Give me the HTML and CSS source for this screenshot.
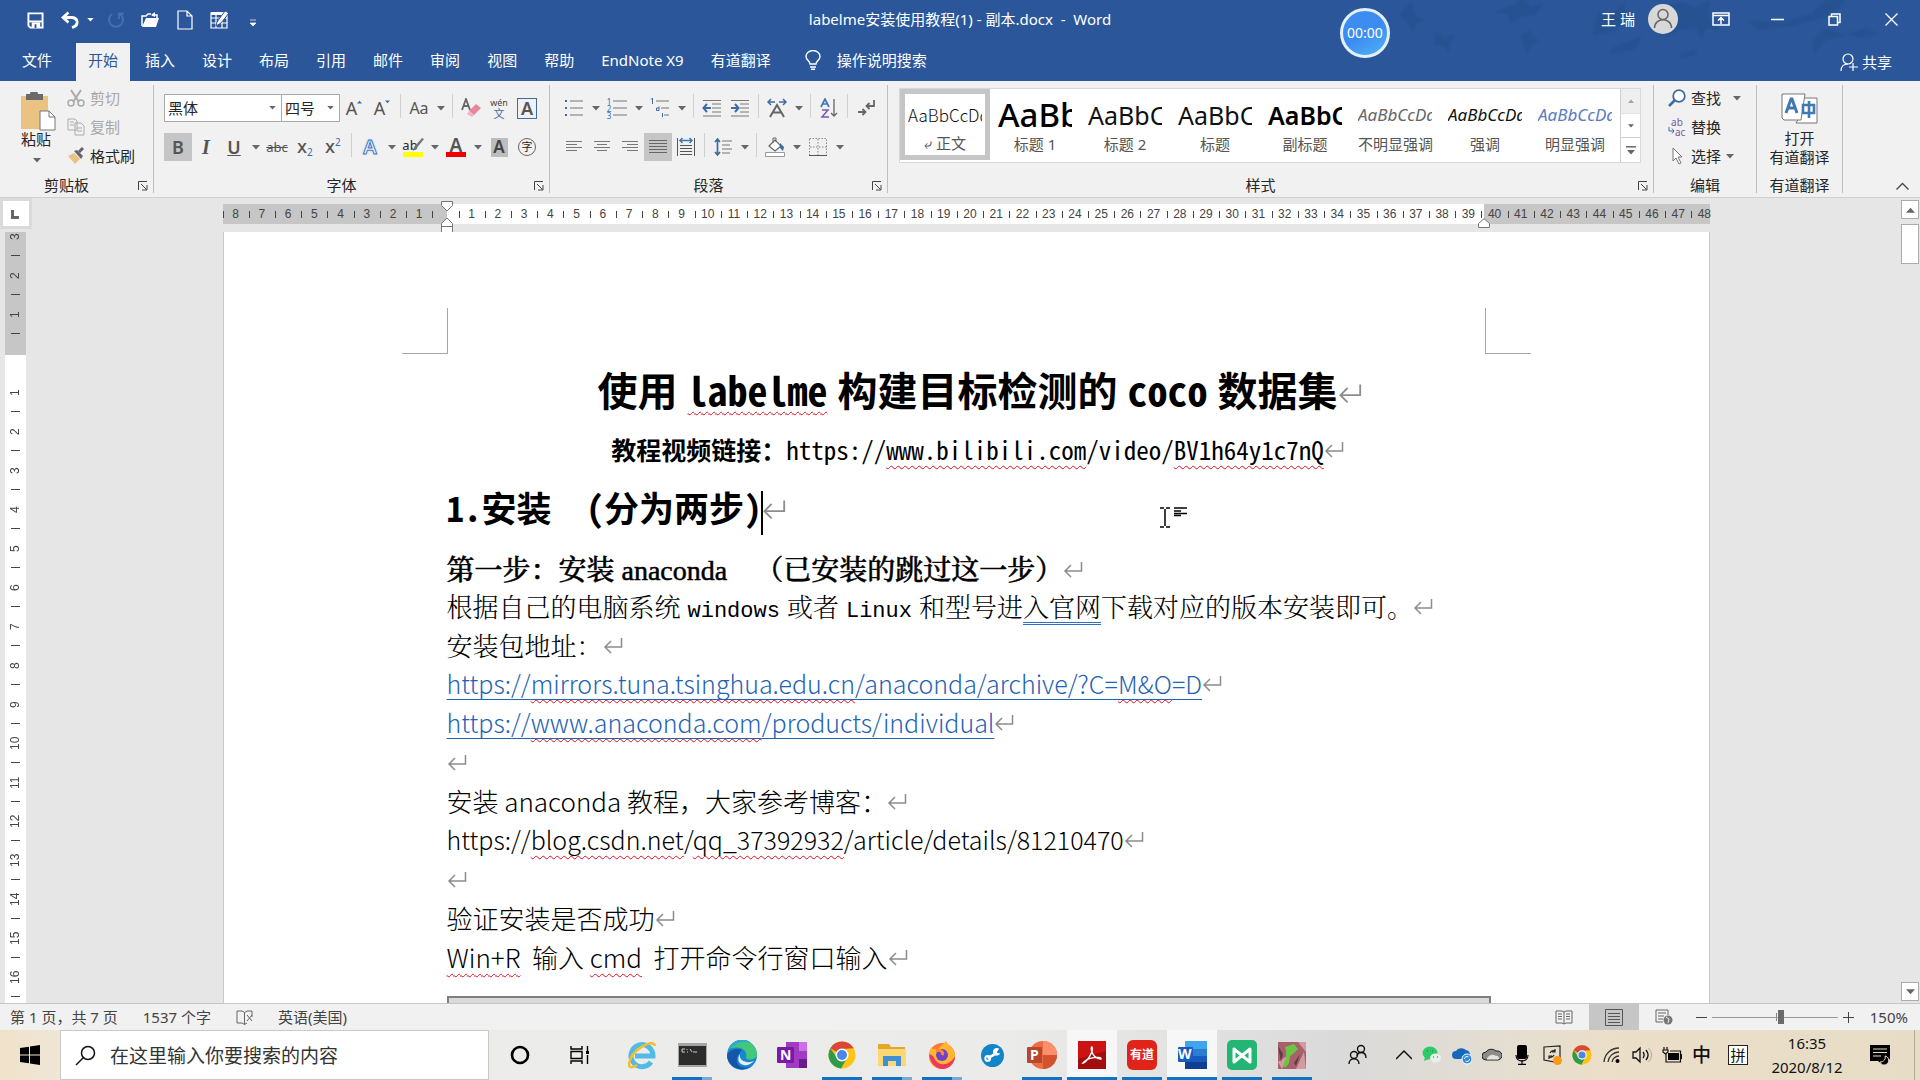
FILE: index.html
```html
<!DOCTYPE html>
<html lang="zh-CN">
<head>
<meta charset="utf-8">
<title>labelme安装使用教程(1) - 副本.docx - Word</title>
<link rel="stylesheet" href="styles.css">
</head>
<body>
<svg class="defs" aria-hidden="true">
  <symbol id="down" viewBox="0 0 8 5"><path d="M0 0h8L4 4.5z" fill="currentColor"/></symbol>
  <symbol id="launch" viewBox="0 0 10 10"><path d="M.5 9V.5H9M3 3l5.500 5.500M9 4v5H4" fill="none" stroke="#444"/></symbol>
  <symbol id="mark" viewBox="0 0 20 20"><path d="M18.500 2v9H2M8 5l-6 6 6 6" fill="none" stroke="#8c8c8c" stroke-width="1.500"/></symbol>
  <symbol id="chrome" viewBox="0 0 28 28"><circle cx="14" cy="14" r="13.500" fill="#fbc417"/><path d="M14 14L2.300 7.200A13.500 13.500 0 0 1 25.700 7.200L14 8z" fill="#d9473a"/><path d="M2.300 7.200A13.500 13.500 0 0 0 13 27.500l6-10.500-10.500-1z" fill="#2f9a4c"/><circle cx="14" cy="14" r="6.500" fill="#fff"/><circle cx="14" cy="14" r="5" fill="#4a86e8"/></symbol>
</svg>
<div class="app">
<header class="head">
  <svg class="flakes" viewBox="0 0 560 80" aria-hidden="true"><g fill="#24508f"><path d="M40 15l12-14 2 14 12 5-10 4-3 9-7-12zM76 32l8 6 12-4-6 8-1 12-5-8-10-2zM134 12l22-8 6-10 8 12 14-2-8 10-18 4-8 6-2-10zM160 36l10-6 2 8 8 2-8 5-6 10-2-10zM238 12l14 2 12-12 2 20-14 10-20 4zM252 48l30-12-8 14-24 4zM300 6l22-4 12 6 16-8-2 18 14 12-16-2-4 12-6-12-18 2-14 8 6-14-20 4zM318 54l16-4 4 4-16 4zM388 20l34 2 30-8 14-14h20l-14 16-40 10-34 4zM452 40l14-12 20 8-20 4-12 14zM486 34l20-6 14 6-20 4z"/></g></svg>
  <div class="titlebar">
    <div class="quick">
      <button aria-label="保存"><svg width="17" height="17" viewBox="0 0 18 18"><path d="M1.500 1.500h15v15h-13l-2-2z" fill="none" stroke="#fff" stroke-width="2"/><path d="M2 9h14v2H2z" fill="#fff"/><path d="M5 11h9v6H5z" fill="#fff"/><path d="M8 13h2v4H8z" fill="#2b579a"/></svg></button>
      <button aria-label="撤消"><svg width="18" height="18" viewBox="0 0 18 18"><path d="M2 6.500h8c8 0 8 8 1 10M7.500 1.500L2 6.500l5.500 5" fill="none" stroke="#fff" stroke-width="2.800"/></svg><svg class="dn" width="7" height="4"><use href="#down"/></svg></button>
      <button aria-label="恢复" class="dim"><svg width="18" height="18" viewBox="0 0 18 18"><path d="M5 3a7 7 0 1 0 8 0M12 8V2.500h5" fill="none" stroke="#4470b0" stroke-width="2"/></svg></button>
      <button aria-label="打开"><svg width="19" height="18" viewBox="0 0 19 18"><path d="M1 15V5h4l2-2h3M11 4h5v3" fill="none" stroke="#fff" stroke-width="1.500"/><path d="M1 16L5 7h13l-3 9z" fill="#fff"/><path d="M10 4l4-3v5z" fill="#fff"/></svg></button>
      <button aria-label="新建"><svg width="16" height="20" viewBox="0 0 16 20"><path d="M1 1h9l5 5v13H1zM10 1v5h5" fill="none" stroke="#fff" stroke-width="1.200"/></svg></button>
      <button aria-label="绘制表格"><svg width="19" height="20" viewBox="0 0 19 20"><path d="M1 3h16v15H1zM1 8h16M1 13h16M6 3v15M12 3v15" fill="none" stroke="#fff" stroke-width="1.200"/><path d="M1 2h13v3H1z" fill="#fff"/><path d="M7 12l8-11 4 2-8 10-5 3z" fill="#fff" stroke="#2b579a"/></svg></button>
      <button aria-label="自定义快速访问工具栏"><svg width="6" height="8" viewBox="0 0 7 8"><path d="M0 .5h7M0 4h7L3.500 7.500z" fill="#fff" stroke="#fff" stroke-width=".8"/></svg></button>
    </div>
    <h1 class="doctitle">labelme安装使用教程(1) - 副本.docx&nbsp; -&nbsp; Word</h1>
    <div class="winbtns">
      <div class="account"><span>王 瑞</span><svg width="30" height="30" viewBox="0 0 30 30"><circle cx="15" cy="15" r="15" fill="#d8d8d8"/><circle cx="15" cy="10.500" r="5" fill="none" stroke="#666" stroke-width="1.500"/><path d="M6.500 24c0-11 17-11 17 0" fill="none" stroke="#666" stroke-width="1.500"/></svg></div>
      <button aria-label="功能区显示选项"><svg width="18" height="14" viewBox="0 0 18 14"><path d="M1 1h16v12H1zM1 3.500h16M9 12V6M6 8.500l3-3 3 3" fill="none" stroke="#fff" stroke-width="1.500"/></svg></button>
      <button aria-label="最小化"><svg width="13" height="13"><path d="M0 6.500h13" stroke="#fff" stroke-width="1.500"/></svg></button>
      <button aria-label="还原"><svg width="13" height="13" viewBox="0 0 13 13"><path d="M1 3.500h8.500V12H1zM3.500 3V1H12v8.500H10" fill="none" stroke="#fff" stroke-width="1.500"/></svg></button>
      <button aria-label="关闭"><svg width="13" height="13" viewBox="0 0 13 13"><path d="M.5.500l12 12M12.500.5l-12 12" stroke="#fff" stroke-width="1.300"/></svg></button>
    </div>
  </div>
  <nav class="tabs">
    <button class="file">文件</button><button class="on">开始</button><button>插入</button><button>设计</button><button>布局</button><button>引用</button><button>邮件</button><button>审阅</button><button>视图</button><button>帮助</button><button>EndNote X9</button><button>有道翻译</button>
    <button class="tell"><svg width="16" height="20" viewBox="0 0 16 20"><path d="M5 14c0-3-4-4-4-7.500a7 6 0 0 1 14 0C15 10 11 11 11 14zM5 17h6M6 19.300h4" fill="none" stroke="#fff" stroke-width="1.400"/></svg>操作说明搜索</button>
    <button class="share"><svg width="18" height="18" viewBox="0 0 18 18"><circle cx="8" cy="6" r="5" fill="none" stroke="#fff" stroke-width="1.200"/><path d="M1 18c0-5 3-7 7-7M13 10v8M9 14h9" fill="none" stroke="#fff" stroke-width="1.200"/></svg>共享</button>
  </nav>
  <div class="timer">00:00</div>
</header>

<section class="ribbon">
  <div class="group clip">
    <div class="gbody">
      <button class="paste"><svg width="36" height="39" viewBox="0 0 36 39"><path d="M1 4h27v33H1z" fill="#eac282"/><path d="M6 2h4a4 3 0 0 1 8 0h5v6H6z" fill="#6a6a6a"/><path d="M20 19h9l6 6v13H20z" fill="#fff" stroke="#777"/><path d="M29 19v6h6" fill="none" stroke="#777"/></svg><span>粘贴</span><svg class="dn" width="8" height="5"><use href="#down"/></svg></button>
      <div class="cmds">
        <button class="off"><svg width="18" height="18" viewBox="0 0 18 18"><path d="M4 1l8 12M14 1L6 13" stroke="#aaa" stroke-width="2"/><circle cx="4" cy="14" r="3" fill="none" stroke="#aaa" stroke-width="1.500"/><circle cx="14" cy="14" r="3" fill="none" stroke="#aaa" stroke-width="1.500"/></svg>剪切</button>
        <button class="off"><svg width="18" height="18" viewBox="0 0 18 18"><path d="M1 1h7l2 2v9H1zM8 5h6l3 3v9H8z" fill="#f1f1f1" stroke="#aaa"/><path d="M3 4h4M3 7h4M10 10h5M10 13h5" stroke="#aaa"/></svg>复制</button>
        <button><svg width="18" height="18" viewBox="0 0 18 18"><path d="M1 9l6-3 6 6-5 5z" fill="#eac282"/><path d="M7 4l3-1 6 6-2 3z" fill="#666"/><path d="M12 5l4-4" stroke="#666" stroke-width="3"/></svg>格式刷</button>
      </div>
    </div>
    <div class="gfoot"><span>剪贴板</span><button class="launch" aria-label="剪贴板设置"><svg width="10" height="10"><use href="#launch"/></svg></button></div>
  </div>

  <div class="group font">
    <div class="gbody rows">
      <div class="row">
        <button class="combo face">黑体<svg class="dn" width="7" height="4"><use href="#down"/></svg></button><button class="combo size">四号<svg class="dn" width="7" height="4"><use href="#down"/></svg></button>
        <button class="t g big">A<svg class="up" width="5" height="4"><use href="#down"/></svg></button><button class="t g big">A<svg width="5" height="4"><use href="#down"/></svg></button><i class="sep"></i>
        <button class="t g aa">Aa</button><button class="a" aria-label="更改大小写选项"><svg class="dn" width="8" height="5"><use href="#down"/></svg></button><i class="sep"></i>
        <button class="t" aria-label="清除所有格式"><svg width="20" height="20" viewBox="0 0 20 20"><path d="M1 12L5 1l4 11M2.500 8h5" fill="none" stroke="#666" stroke-width="1.800"/><path d="M8 13l7-7 5 4-7 7z" fill="#e8879b"/><path d="M8 13l5 4-2 2-5-3z" fill="#f3b6c1"/></svg></button>
        <button class="t wen"><small>wén</small><span>文</span></button>
        <button class="t"><span class="boxa">A</span></button>
      </div>
      <div class="row">
        <button class="t g sel b">B</button><button class="t g it">I</button><button class="t g un">U</button><button class="a" aria-label="下划线选项"><svg class="dn" width="8" height="5"><use href="#down"/></svg></button>
        <button class="t st">abc</button><button class="t g x">X<sub>2</sub></button><button class="t g x">X<sup>2</sup></button><i class="sep"></i>
        <button class="t glow">A</button><button class="a" aria-label="文本效果选项"><svg class="dn" width="8" height="5"><use href="#down"/></svg></button>
        <button class="t bar hl">ab<svg width="12" height="14" viewBox="0 0 12 14"><path d="M12 1L4 11l-3 2 1-4 8-9z" fill="#777"/></svg></button><button class="a" aria-label="突出显示选项"><svg class="dn" width="8" height="5"><use href="#down"/></svg></button>
        <button class="t g bar red">A</button><button class="a" aria-label="字体颜色选项"><svg class="dn" width="8" height="5"><use href="#down"/></svg></button>
        <button class="t"><span class="shade">A</span></button><button class="t"><span class="circ">字</span></button>
      </div>
    </div>
    <div class="gfoot"><span>字体</span><button class="launch" aria-label="字体设置"><svg width="10" height="10"><use href="#launch"/></svg></button></div>
  </div>

  <div class="group para">
    <div class="gbody rows">
      <div class="row">
        <button class="t" aria-label="项目符号"><svg width="20" height="20" viewBox="0 0 20 20"><path d="M6 3h13M6 10h13M6 17h13" stroke="#777" stroke-width="1.200"/><path d="M1 2h2v2H1zM1 9h2v2H1zM1 16h2v2H1z" fill="#3f6ba5"/></svg></button><button class="a" aria-label="项目符号选项"><svg class="dn" width="8" height="5"><use href="#down"/></svg></button>
        <button class="t num" aria-label="编号"><span>1<br>2<br>3</span><svg width="14" height="20" viewBox="0 0 14 20"><path d="M0 3h14M0 10h14M0 17h14" stroke="#777" stroke-width="1.200"/></svg></button><button class="a" aria-label="编号选项"><svg class="dn" width="8" height="5"><use href="#down"/></svg></button>
        <button class="t" aria-label="多级列表"><svg width="20" height="20" viewBox="0 0 20 20"><path d="M6 3h13M11 10h8M14 17h5" stroke="#777" stroke-width="1.200"/><path d="M1 1.500L2.500 0v6M9 8.500v4H6.500v-2.500H9M12.500 15v4" stroke="#3f6ba5" fill="none"/></svg></button><button class="a" aria-label="多级列表选项"><svg class="dn" width="8" height="5"><use href="#down"/></svg></button><i class="sep"></i>
        <button class="t" aria-label="减少缩进量"><svg width="20" height="18" viewBox="0 0 20 18"><path d="M1 1.500h18M10 5h9M10 9h9M10 13h9M1 17h18" stroke="#777"/><path d="M9 9H2M5 5L1.500 9 5 13" fill="none" stroke="#3f6ba5" stroke-width="2"/></svg></button>
        <button class="t" aria-label="增加缩进量"><svg width="20" height="18" viewBox="0 0 20 18"><path d="M1 1.500h18M10 5h9M10 9h9M10 13h9M1 17h18" stroke="#777"/><path d="M1 9h7M5 5l3.500 4L5 13" fill="none" stroke="#3f6ba5" stroke-width="2"/></svg></button><i class="sep"></i>
        <button class="t" aria-label="中文版式"><svg width="20" height="20" viewBox="0 0 20 20"><path d="M3 19l7-12 7 12M6 14.500h8" fill="none" stroke="#666" stroke-width="2"/><path d="M8 4H2M4 1L1 4l3 3M12 4h6M16 1l3 3-3 3" fill="none" stroke="#3f6ba5" stroke-width="1.500"/></svg></button><button class="a" aria-label="中文版式选项"><svg class="dn" width="8" height="5"><use href="#down"/></svg></button><i class="sep"></i>
        <button class="t" aria-label="排序"><svg width="18" height="20" viewBox="0 0 18 20"><path d="M1 9l4-8 4 8M2.500 6h5" fill="none" stroke="#3f7ab5" stroke-width="1.700"/><path d="M2 12h6l-6 7h7" fill="none" stroke="#8055b0" stroke-width="1.500"/><path d="M14 1v17M11 15l3 3 3-3" fill="none" stroke="#666" stroke-width="1.300"/></svg></button><i class="sep"></i>
        <button class="t" aria-label="显示编辑标记"><svg width="18" height="18" viewBox="0 0 18 18"><path d="M17 1v6h-7M12.500 4l-3 3 3 3M1 13h7M5.500 10l3 3-3 3" fill="none" stroke="#666" stroke-width="1.800"/></svg></button>
      </div>
      <div class="row">
        <button class="t" aria-label="左对齐"><svg width="16" height="14"><path d="M0 1.500h16M0 4.500h11M0 7.500h16M0 10.500h11" stroke="#777"/></svg></button>
        <button class="t" aria-label="居中"><svg width="16" height="14"><path d="M0 1.500h16M3 4.500h10M0 7.500h16M3 10.500h10" stroke="#777"/></svg></button>
        <button class="t" aria-label="右对齐"><svg width="16" height="14"><path d="M0 1.500h16M5 4.500h11M0 7.500h16M5 10.500h11" stroke="#777"/></svg></button>
        <button class="t sel" aria-label="两端对齐"><svg width="18" height="16"><path d="M0 1.500h18M0 4.500h18M0 7.500h18M0 10.500h18M0 13.500h18" stroke="#666"/></svg></button>
        <button class="t" aria-label="分散对齐"><svg width="18" height="20" viewBox="0 0 18 20"><path d="M.5 1v18M17.500 1v18M3 8.500h12M3 11.500h12M3 14.500h12M3 17.500h12" stroke="#555"/><path d="M3 3.500h12M5.500 1L3 3.500 5.500 6M12.500 1L15 3.500 12.500 6" fill="none" stroke="#3f7ab5" stroke-width="1.500"/></svg></button><i class="sep"></i>
        <button class="t" aria-label="行距"><svg width="18" height="20" viewBox="0 0 18 20"><path d="M8 4h10M8 8h8M8 12h10M8 16h8" stroke="#777" stroke-width="1.200"/><path d="M3.500 2v16M1 5l2.500-3L6 5M1 15l2.500 3L6 15" fill="none" stroke="#3f6ba5" stroke-width="1.700"/></svg></button><button class="a" aria-label="行距选项"><svg class="dn" width="8" height="5"><use href="#down"/></svg></button><i class="sep"></i>
        <button class="t" aria-label="底纹"><svg width="20" height="20" viewBox="0 0 20 20"><path d="M4 9l6-6 6 6-6 5z" fill="#fff" stroke="#666" stroke-width="1.200"/><path d="M8 6V1h3v4" fill="none" stroke="#666"/><path d="M15 6l4 4-1 4-3-3z" fill="#3f6ba5"/><path d="M.5 15.500h19v4H.5z" fill="#fff" stroke="#999"/></svg></button><button class="a" aria-label="底纹选项"><svg class="dn" width="8" height="5"><use href="#down"/></svg></button>
        <button class="t" aria-label="边框"><svg width="18" height="18" viewBox="0 0 18 18"><path d="M.5.500h17v17H.5zM9 1v17M1 9h17" fill="none" stroke="#888" stroke-dasharray="1.500 1.500"/><path d="M0 17.500h18" stroke="#555"/></svg></button><button class="a" aria-label="边框选项"><svg class="dn" width="8" height="5"><use href="#down"/></svg></button>
      </div>
    </div>
    <div class="gfoot"><span>段落</span><button class="launch" aria-label="段落设置"><svg width="10" height="10"><use href="#launch"/></svg></button></div>
  </div>

  <div class="group styles">
    <div class="gbody">
      <div class="gallery">
        <button class="style cur"><span class="smp body">AaBbCcDd</span><span class="nm">⤶ 正文</span></button>
        <button class="style"><span class="smp h1">AaBb</span><span class="nm">标题 1</span></button>
        <button class="style"><span class="smp h2">AaBbC</span><span class="nm">标题 2</span></button>
        <button class="style"><span class="smp h2">AaBbC</span><span class="nm">标题</span></button>
        <button class="style"><span class="smp h2 bold">AaBbC</span><span class="nm">副标题</span></button>
        <button class="style"><span class="smp em soft">AaBbCcDd</span><span class="nm">不明显强调</span></button>
        <button class="style"><span class="smp em">AaBbCcDd</span><span class="nm">强调</span></button>
        <button class="style"><span class="smp em blue">AaBbCcDd</span><span class="nm">明显强调</span></button>
        <div class="gscroll"><button class="gone" aria-label="上一行"><svg class="dn up" width="6" height="4"><use href="#down"/></svg></button><button aria-label="下一行"><svg class="dn" width="6" height="4"><use href="#down"/></svg></button><button aria-label="其他"><svg width="10" height="9" viewBox="0 0 10 9"><path d="M0 .8h10" stroke="#666" stroke-width="1.500"/><path d="M1 4h8L5 8.500z" fill="#666"/></svg></button></div>
      </div>
    </div>
    <div class="gfoot"><span>样式</span><button class="launch" aria-label="样式设置"><svg width="10" height="10"><use href="#launch"/></svg></button></div>
  </div>

  <div class="group edit">
    <div class="gbody cmds">
      <button><svg width="18" height="18" viewBox="0 0 18 18"><circle cx="11" cy="7" r="5.800" fill="#fff" stroke="#3f6ba5" stroke-width="1.800"/><path d="M7 11l-6 6" stroke="#3f6ba5" stroke-width="2.500"/></svg>查找<svg class="dn far" width="8" height="5"><use href="#down"/></svg></button>
      <button><span class="rep"><b>ab</b><em><svg width="7" height="7" viewBox="0 0 7 7"><path d="M1 0v4h5M4 1.500L6 4 4 6.500" fill="none" stroke="#3f6ba5"/></svg><b>ac</b></em></span>替换</button>
      <button><svg width="18" height="18" viewBox="0 0 18 18"><path d="M5 1v13l3-3 3 6 2-1-3-6h4z" fill="#fff" stroke="#777"/></svg>选择<svg class="dn" width="8" height="5"><use href="#down"/></svg></button>
    </div>
    <div class="gfoot"><span>编辑</span></div>
  </div>

  <div class="group youdao">
    <div class="gbody"><button class="open"><svg width="38" height="32" viewBox="0 0 38 32"><path d="M18 5h18v25H15l3-5z" fill="#fff" stroke="#777"/><path d="M1 1h23l-4 26H3l-2-2z" fill="#fff" stroke="#777"/><path d="M5 20l5-14h1l5 14M7 15h7" fill="none" stroke="#3f7ab5" stroke-width="3"/><path d="M22 12h11v8H22zM28 8v17" fill="none" stroke="#3f7ab5" stroke-width="2.600"/></svg><span>打开</span><span>有道翻译</span></button></div>
    <div class="gfoot"><span>有道翻译</span></div>
  </div>
  <div class="tail"><button aria-label="折叠功能区"><svg width="13" height="8"><path d="M.5 7.500l6-6 6 6" fill="none" stroke="#444" stroke-width="1.300"/></svg></button></div>
</section>

<main class="work">
  <div class="vcol">
    <div class="tabsel"><i></i></div>
    <div class="vrule"><div class="vnums neg"><span>3</span><span>2</span><span>1</span></div><div class="vnums"><span></span><span>1</span><span>2</span><span>3</span><span>4</span><span>5</span><span>6</span><span>7</span><span>8</span><span>9</span><span>10</span><span>11</span><span>12</span><span>13</span><span>14</span><span>15</span><span>16</span><span></span></div></div>
  </div>
  <div class="canvas">
    <div class="hrule">
      <div class="hnums"><span>8</span><span>7</span><span>6</span><span>5</span><span>4</span><span>3</span><span>2</span><span>1</span><span></span><span>1</span><span>2</span><span>3</span><span>4</span><span>5</span><span>6</span><span>7</span><span>8</span><span>9</span><span>10</span><span>11</span><span>12</span><span>13</span><span>14</span><span>15</span><span>16</span><span>17</span><span>18</span><span>19</span><span>20</span><span>21</span><span>22</span><span>23</span><span>24</span><span>25</span><span>26</span><span>27</span><span>28</span><span>29</span><span>30</span><span>31</span><span>32</span><span>33</span><span>34</span><span>35</span><span>36</span><span>37</span><span>38</span><span>39</span><span>40</span><span>41</span><span>42</span><span>43</span><span>44</span><span>45</span><span>46</span><span>47</span><span>48</span></div>
      <svg class="ind left" width="12" height="33" viewBox="0 0 12 33"><path d="M.5.500h11v4L6 10 .5 4.500zM.5 31.500v-9L6 17l5.500 5.500v9zM.5 25.500h11" fill="#fff" stroke="#777"/></svg>
      <svg class="ind right" width="12" height="10" viewBox="0 0 12 10"><path d="M.5 9.500v-4L6 .7l5.500 4.800v4z" fill="#fff" stroke="#777"/></svg>
    </div>
    <article class="page">
      <div class="corners"><i></i><i></i></div>
      <div class="text">
        <p class="title">使用<span class="ml"><u class="sq">labelme</u></span>构建目标检测的<span class="ml">coco</span>数据集<svg class="mk l"><use href="#mark"/></svg></p>
        <p class="sub"><b>教程视频链接：</b><span>https://<u class="sq">www.bilibili.com</u>/video/<u class="sq">BV1h64y1c7nQ</u></span><svg class="mk"><use href="#mark"/></svg></p>
        <p class="sec"><span>1.</span>安装　<span>(</span>分为两步<span>)</span><i class="caret"></i><svg class="mk l"><use href="#mark"/></svg></p>
        <p class="step">第一步：安装 anaconda　（已安装的跳过这一步）<svg class="mk"><use href="#mark"/></svg></p>
        <p class="song">根据自己的电脑系统<span>windows</span>或者<span>Linux</span>和型号进<u class="gr">入官网</u>下载对应的版本安装即可。<svg class="mk"><use href="#mark"/></svg></p>
        <p class="song">安装包地址：<svg class="mk"><use href="#mark"/></svg></p>
        <p class="url"><a href="#">https://<u class="sq">mirrors.tuna.tsinghua.edu.cn</u>/anaconda/archive/?C=<u class="sq">M&amp;O</u>=D</a><svg class="mk"><use href="#mark"/></svg></p>
        <p class="url"><a href="#">https://<u class="sq">www.anaconda.com</u>/products/individual</a><svg class="mk"><use href="#mark"/></svg></p>
        <p><svg class="mk"><use href="#mark"/></svg></p>
        <p>安装 anaconda 教程，大家参考博客：<svg class="mk"><use href="#mark"/></svg></p>
        <p class="url">https://<u class="sq">blog.csdn.net</u>/<u class="sq">qq_37392932</u>/article/details/81210470<svg class="mk"><use href="#mark"/></svg></p>
        <p><svg class="mk"><use href="#mark"/></svg></p>
        <p>验证安装是否成功<svg class="mk"><use href="#mark"/></svg></p>
        <p><u class="sq">Win+R</u>&nbsp; 输入 <u class="sq">cmd</u>&nbsp; 打开命令行窗口输入<svg class="mk"><use href="#mark"/></svg></p>
        <div class="box"></div>
      </div>
      <svg class="ibeam" width="27" height="21" viewBox="0 0 27 21"><path d="M0 1h4M6 1h4M0 20h4M6 20h4M5 2v17M14 1h13M14 4h7M14 6.500h13M14 8.500h7" stroke="#000" stroke-width="1.500"/></svg>
    </article>
  </div>
  <div class="vscroll"><button aria-label="向上滚动"><svg class="dn up" width="9" height="6"><use href="#down"/></svg></button><i></i><button aria-label="向下滚动"><svg class="dn" width="9" height="6"><use href="#down"/></svg></button></div>
</main>

<footer class="status">
  <div class="info"><span>第 1 页，共 7 页</span><span>1537 个字</span><svg width="17" height="15" viewBox="0 0 17 15"><path d="M16 7V1h-5L8.500 2.500 6 1H1v12h5l2.500 1.500L11 13M8.500 2.500v12M11 5l5 6M16 5l-5 6" fill="none" stroke="#666"/></svg><span>英语(美国)</span></div>
  <div class="views">
    <button aria-label="阅读视图"><svg width="18" height="15" viewBox="0 0 18 15"><path d="M1 1h6l2 1 2-1h6v12h-6l-2 1-2-1H1zM9 2v12M3 4h4M3 6.500h4M3 9h4M11 4h4M11 6.500h4M11 9h4" fill="none" stroke="#666"/></svg></button>
    <button class="on" aria-label="页面视图"><svg width="18" height="17" viewBox="0 0 18 17"><path d="M.5.500h17v16H.5zM3 4.500h12M3 7.500h12M3 10.500h12M3 13.500h12" fill="none" stroke="#555"/></svg></button>
    <button aria-label="Web 版式视图"><svg width="18" height="16" viewBox="0 0 18 16"><path d="M8 13H1V1h12v5M3 4h8M3 7h6M3 10h5" fill="none" stroke="#666"/><circle cx="13" cy="11" r="4.500" fill="#777"/><path d="M11 8l3 2-1 4" stroke="#f1f1f1" fill="none"/></svg></button>
  </div>
  <div class="zoom"><button aria-label="缩小"><svg width="11" height="11"><path d="M0 5.500h11" stroke="#444"/></svg></button><input type="range" min="10" max="230" value="132" aria-label="显示比例"><button aria-label="放大"><svg width="11" height="11"><path d="M0 5.500h11M5.500 0v11" stroke="#444"/></svg></button><span>150%</span></div>
</footer>

<div class="taskbar">
  <button class="start" aria-label="开始"><svg width="20" height="20" viewBox="0 0 20 20"><path d="M0 3l9-1.300V9.500H0zM10 1.500L20 0v9.500H10zM0 10.500h9v7.800L0 17zM10 10.500h10V20l-10-1.500z"/></svg></button>
  <label class="search"><svg width="21" height="21" viewBox="0 0 21 21"><circle cx="13" cy="8" r="6.500" fill="none" stroke="#111" stroke-width="1.500"/><path d="M8.500 12.500L1 20" stroke="#111" stroke-width="1.500"/></svg><input type="text" placeholder="在这里输入你要搜索的内容" aria-label="搜索"></label>
  <div class="sys">
    <button aria-label="Cortana"><svg width="20" height="20"><circle cx="10" cy="10" r="8" fill="none" stroke="#000" stroke-width="2.600"/></svg></button>
    <button aria-label="任务视图"><svg width="21" height="20" viewBox="0 0 21 20"><path d="M1 1v3h11V1M1 19v-3h11v3M1 6.500h11v7H1zM17.500 1v5M17.500 10v9" fill="none" stroke="#000" stroke-width="1.400"/><path d="M16 6h3v3h-3z"/></svg></button>
  </div>
  <div class="apps">
    <button aria-label="Internet Explorer"><svg width="30" height="30" viewBox="0 0 30 30"><path d="M8 16h18a11 11 0 1 0-2 6" fill="none" stroke="#4fbbe6" stroke-width="5"/><path d="M28 6C27-2 4 9 2 24c0 5 5 3 8 1" fill="none" stroke="#f3bf2d" stroke-width="2.500"/></svg></button>
    <button class="run two" aria-label="命令提示符"><svg width="29" height="24" viewBox="0 0 29 24"><path d="M0 0h29v24H0z" fill="#a5a5a5"/><path d="M1 3h27v19H1z" fill="#2c2c2c"/><path d="M4 6h3M4 6v3h3M9 6v1M9 9h1M12 6l2 3M15 9h4" stroke="#ccc" fill="none"/></svg></button>
    <button aria-label="Edge"><svg width="30" height="30" viewBox="0 0 30 30"><circle cx="15" cy="15" r="15" fill="#1687d0"/><path d="M1 10C5-4 28-3 30 14c0 6-9 7-11 4 3-10-11-13-18-8z" fill="#43c87a"/><path d="M1 10C6-3 20-2 24 3c-8-3-14 0-23 7z" fill="#2aaad0"/><path d="M12 14c-7 10 4 18 14 11C16 34 0 28 0 15c3-6 11-7 15-5z" fill="#1656a8"/><path d="M13 14c-2 7 8 10 14 7-3 3-7 5-10 4-6-1-7-7-4-11z" fill="#eee"/></svg></button>
    <button aria-label="OneNote"><svg width="30" height="26" viewBox="0 0 30 26"><path d="M9 0h21v26H9z" fill="#a23bc4"/><path d="M22 0h8v9h-8z" fill="#cf6fe6"/><path d="M22 17h8v9h-8z" fill="#6a1c8c"/><rect y="5" width="17" height="16" rx="1" fill="#7719aa"/><text x="3" y="18" class="logo">N</text></svg></button>
    <button class="run" aria-label="Chrome"><svg width="28" height="28"><use href="#chrome"/></svg></button>
    <button class="run two" aria-label="文件资源管理器"><svg width="28" height="24" viewBox="0 0 28 24"><path d="M0 1h11l2 3h14v19H0z" fill="#e4a72b"/><path d="M0 6h28v17H0z" fill="#fbd873"/><path d="M5 23V13h18v10h-5v-5h-8v5z" fill="#3d8fd6"/></svg></button>
    <button class="run two" aria-label="Firefox"><svg width="28" height="28" viewBox="0 0 28 28"><circle cx="14" cy="15" r="13" fill="#ff7a2f"/><path d="M3 6c1 3 3 2 7 2l8-8c2 5 10 7 9 17-3 14-24 14-26 0z" fill="#ffb52e"/><path d="M1 13c2 20 25 19 26 2-5 10-17 12-22 0z" fill="#ef3562"/><circle cx="14" cy="14" r="6" fill="#7440c8"/><path d="M8 10c4-2 8 1 6 4" fill="none" stroke="#ff8a2a" stroke-width="3"/></svg></button>
    <button aria-label="工具"><svg width="23" height="23" viewBox="0 0 24 24"><circle cx="12" cy="12" r="12" fill="#1484c9"/><path d="M7 15l10-6" stroke="#fff" stroke-width="3"/><circle cx="7" cy="15" r="2.500" fill="none" stroke="#fff" stroke-width="2"/><path d="M19 5l-3 4 4 1a4 4 0 1 1-1-5z" fill="#fff"/></svg></button>
    <button class="run" aria-label="PowerPoint"><svg width="30" height="28" viewBox="0 0 30 28"><circle cx="16" cy="14" r="14" fill="#ed6c47"/><path d="M16 0a14 14 0 0 1 14 14H16z" fill="#ff8f6b"/><path d="M16 14h14a14 14 0 0 1-14 14z" fill="#d35230"/><rect y="6" width="15" height="16" rx="1" fill="#b7472a"/><text x="3" y="19" class="logo">P</text></svg></button>
    <button class="run wide" aria-label="Acrobat"><svg width="28" height="28" viewBox="0 0 28 28"><path d="M0 0h28v28H0z" fill="#a30d0d"/><path d="M0 0h28v10L0 18z" fill="#cc1212"/><path d="M5 22c4-1 11-12 9-16-2 0 0 12 9 12 1-3-14-2-18 4z" fill="none" stroke="#fff" stroke-width="1.400"/></svg></button>
    <button class="run" aria-label="有道词典"><span class="yd">有道</span></button>
    <button class="run wide" aria-label="Word"><svg width="29" height="28" viewBox="0 0 29 28"><path d="M7 0h22v28H7z" fill="#2b7cd3"/><path d="M7 0h22v8H7z" fill="#41a5ee"/><path d="M7 15h22v6H7z" fill="#185abd"/><path d="M7 21h22v7H7z" fill="#103f91"/><rect y="6" width="15" height="15" rx="1" fill="#185abd"/><text x="0" y="18" class="logo">W</text></svg></button>
    <button class="run" aria-label="脑图"><svg width="30" height="30" viewBox="0 0 30 30"><rect width="30" height="30" rx="5" fill="#22b573"/><path d="M7 9v13l16-13v13L7 9z" fill="none" stroke="#fff" stroke-width="3" stroke-linejoin="round"/></svg></button>
    <button class="run" aria-label="图片"><svg width="28" height="27" viewBox="0 0 28 27"><path d="M0 0h28v27H0z" fill="#a8616c"/><path d="M20 0h8v10zM18 27L26 10l2 17zM0 20L12 12 4 27z" fill="#d59aa0"/><path d="M7 5l9-3 4 5-4 4-4 3-1 7-3 4H4l4-8V9z" fill="#6cc644"/><path d="M0 4l5 8-2 8zM22 12l-4 12-2-3z" fill="#5c3c46"/></svg></button>
  </div>
  <div class="tray">
    <svg width="20" height="22" viewBox="0 0 20 22"><circle cx="13" cy="5" r="3.500" fill="none" stroke="#111" stroke-width="1.400"/><path d="M9 12c1-5 9-5 9 2" fill="none" stroke="#111" stroke-width="1.400"/><circle cx="6" cy="11" r="3.500" fill="none" stroke="#111" stroke-width="1.400"/><path d="M1 20c0-7 10-7 10 0" fill="none" stroke="#111" stroke-width="1.400"/></svg>
    <i class="gap"></i>
    <svg width="16" height="20" viewBox="0 0 16 20"><path d="M0 14l8-8 8 8" fill="none" stroke="#111" stroke-width="1.500"/></svg>
    <svg width="20" height="20" viewBox="0 0 20 20"><ellipse cx="8" cy="8" rx="7.500" ry="6.500" fill="#2ecb6b"/><path d="M3 12l-1 4 5-2z" fill="#2ecb6b"/><ellipse cx="13.500" cy="13" rx="5.500" ry="4.500" fill="#e6efe9"/><path d="M5 6h1M10 6h1M11 12h1M15 12h1" stroke="#555"/></svg>
    <svg width="20" height="20" viewBox="0 0 20 20"><path d="M4 14a4 4 0 0 1 0-8 6 5 0 0 1 10-1 5 5 0 0 1 2 9z" fill="#1669b8"/><circle cx="15" cy="14" r="5" fill="#2c8be0" stroke="#fff"/><path d="M12.500 14a2.500 2.500 0 0 1 4-2M17.500 14a2.500 2.500 0 0 1-4 2" stroke="#fff" fill="none"/></svg>
    <svg width="20" height="20" viewBox="0 0 20 20"><path d="M4 15a4 4 0 0 1 0-8 6 5 0 0 1 10-1 5 4.500 0 0 1 2 9z" fill="#8b8b88" stroke="#222"/><path d="M5 14.500c0-3 5-6 8-4 4 0 5 3 3 4z" fill="#e4e4e0"/></svg>
    <svg width="20" height="20" viewBox="0 0 20 20"><rect x="5" y="0" width="10" height="14" rx="2"/><path d="M4 10c0 8 12 8 12 0M10 15v4M6 19.300h8" fill="none" stroke="#000" stroke-width="1.200"/></svg>
    <svg width="20" height="20" viewBox="0 0 20 20"><path d="M2 2l16-1v17L2 15zM13 6a4 4 0 0 0-5 2M7 12a4 4 0 0 0 5-2M13 4v3h-3M7 14v-3h3" fill="none" stroke="#222" stroke-width="1.200"/><circle cx="15.500" cy="15.500" r="4.500" fill="#ff9a16"/></svg>
    <svg width="20" height="20"><use href="#chrome"/></svg>
    <svg width="20" height="20" viewBox="0 0 20 20"><path d="M2 17A15 15 0 0 1 17 3M6 17A11 11 0 0 1 17 7M10 17a7 7 0 0 1 7-6" fill="none" stroke="#333" stroke-width="1.300"/><circle cx="15.500" cy="16" r="2"/></svg>
    <svg width="20" height="20" viewBox="0 0 20 20"><path d="M1 7h3l4-4v14l-4-4H1zM11 7c1.500 2 1.500 4 0 6M14 5c2.500 3 2.500 7 0 10" fill="none" stroke="#111" stroke-width="1.300"/><path d="M16.500 3c4 4 4 10 0 14" fill="none" stroke="#aaa"/></svg>
    <svg width="20" height="20" viewBox="0 0 20 20"><path d="M6 8h11v7H6z"/><path d="M4 9v8h14.500V6H8M19.500 9v5M2 2v3M5 2v3M1 5h5v2L3.500 9 1 7z" fill="none" stroke="#111" stroke-width="1.200"/></svg>
    <span class="ime">中</span><span class="py">拼</span>
    <time><span>16:35</span><span>2020/8/12</span></time>
    <svg class="note" width="20" height="20" viewBox="0 0 20 20"><path d="M0 0h20v14l-4 2-3 4-5-4H0z"/><path d="M3 4h14M3 7.500h14M3 11h8" stroke="#e6dac4" stroke-width="1.200"/><path d="M15 11a4.500 4.500 0 1 1-5 6c4 0 6-3 5-6z" stroke="#e6dac4"/></svg>
    <i class="desk"></i>
  </div>
</div>
</div>
</body>
</html>
```
FILE: styles.css
```css
* { box-sizing: border-box; }
body {
  margin: 0;
  font: 15px/20px "Noto Sans", "Noto Sans CJK SC", sans-serif;
  color: #262626;
}
button {
  display: flex;
  align-items: center;
  justify-content: center;
  padding: 0;
  border: 0;
  background: none;
  color: inherit;
  font: inherit;
  white-space: nowrap;
}
svg { display: block; flex: none; }
p { margin: 0; }
.defs { position: absolute; width: 0; height: 0; }
.app { display: flex; flex-direction: column; height: 100vh; overflow: hidden; }
.dn { color: #666; }
.up { transform: rotate(180deg); }

/* title bar and tabs */
.head { position: relative; background: #2b579a; color: #fff; flex: none; }
.flakes { position: absolute; right: 0; top: 0; width: 560px; height: 80px; opacity: .7; filter: blur(1px); }
.titlebar { position: relative; display: grid; grid-template-columns: 1fr auto 1fr; height: 38px; align-items: center; }
.quick { display: flex; align-items: center; padding: 2px 0 0 27px; gap: 17px; }
.quick .dn { color: #fff; margin-left: 8px; }
.quick button:last-child { margin: 6px 0 0 4px; }
.quick .dim { margin: 0 -1px 0 -4px; }
.doctitle { margin: 0; font-size: 15px; font-weight: 400; line-height: 36px; }
.account { display: flex; align-items: center; gap: 13px; padding-right: 14px; }
.winbtns { display: flex; justify-content: flex-end; }
.winbtns button { width: 57px; height: 38px; }
.tabs { position: relative; display: flex; height: 43px; padding: 5px 28px 0 10px; gap: 3px; }
.tabs button { padding: 0 12px 4px; height: 38px; }
.tabs .file { margin-right: 9px; }
.tabs .on { background: #f1f1f1; color: #2b579a; }
.tabs .tell { margin-left: 7px; gap: 16px; }
.tabs .share { margin-left: auto; padding: 0; gap: 4px; }
.timer {
  position: absolute; left: 1340px; top: 8px;
  width: 50px; height: 50px;
  border: 3px solid #e4f0fb; border-radius: 50%;
  background: linear-gradient(150deg, #3f8ff0, #3b8bf2 50%, #50b4f6);
  font-size: 14px; line-height: 44px; text-align: center;
}

/* ribbon */
.ribbon { display: flex; flex: none; height: 117px; padding: 4px 0 4px; background: #f1f1f1; border-bottom: 1px solid #cfcfcf; }
.group { display: flex; flex-direction: column; justify-content: space-between; border-right: 1px solid #bfbfbf; height: 108px; flex: none; }
.gbody { display: flex; }
.gfoot { display: flex; height: 16px; align-items: center; }
.gfoot span { flex: 1; text-align: center; line-height: 16px; }
.launch { width: 20px; height: 12px; align-items: flex-end; }
.clip { width: 154px; }
.font { width: 396px; }
.para { width: 338px; }
.styles { flex: 1 0 auto; }
.edit { width: 103px; }
.youdao { width: 86px; }
.tail { flex: none; width: 77px; display: flex; justify-content: flex-end; align-items: flex-end; padding: 0 11px 3px; }
.clip .gbody { padding: 3px 0 0 21px; gap: 12px; }
.paste { flex-direction: column; width: 34px; }
.paste span { margin: -2px 0 9px -4px; }
.paste .dn { margin-left: -2px; }
.cmds { display: flex; flex-direction: column; gap: 9px; }
.cmds button { gap: 5px; justify-content: flex-start; height: 20px; }
.cmds .off { color: #a8a8a8; }
.edit .cmds { padding: 3px 0 0 14px; }
.cmds .far { margin-left: 7px; }
.rep { display: flex; flex-direction: column; width: 18px; font-size: 10px; line-height: 10px; color: #7a5a9a; }
.rep b { font-weight: 400; }
.rep em { display: flex; font-style: normal; }
.rows { flex-direction: column; gap: 11px; padding: 9px 0 0 10px; }
.row { display: flex; height: 28px; }
.sep { width: 9px; flex: none; background: linear-gradient(#d0d0d0, #d0d0d0) 4px 0 / 1px 24px no-repeat; }
.t { width: 28px; height: 28px; flex: none; }
.a { width: 15px; flex: none; }
.g { color: #555; font-weight: 600; font-size: 18px; }
.sel { background: #c5c5c5; }
.combo { height: 28px; background: #fff; border: 1px solid #ababab; justify-content: space-between; padding: 0 5px 0 3px; }
.face { width: 118px; }
.size { width: 58px; border-left: 0; }
.big { font-weight: 400; font-size: 18px; }
.big svg { align-self: flex-start; margin-top: 6px; color: #3f6ba5; }
.aa { font-weight: 400; font-size: 16px; }
.wen { flex-direction: column; font-size: 11px; line-height: 11px; color: #3f6ba5; }
.wen small { font-size: 9px; line-height: 11px; color: #444; }
.boxa { width: 20px; height: 21px; border: 1px solid #3f6ba5; color: #555; font-weight: 600; font-size: 18px; line-height: 19px; }
.it { font-family: "Liberation Serif", serif; font-style: italic; font-size: 20px; }
.un { text-decoration: underline; }
.st { text-decoration: line-through; font-size: 13px; color: #555; }
.x { font-size: 15px; }
.x sub, .x sup { font-size: 10px; line-height: 10px; color: #3f6ba5; font-weight: 400; }
.x sub { align-self: flex-end; margin-bottom: 4px; }
.x sup { align-self: flex-start; margin-top: 4px; }
.glow { font-size: 20px; font-weight: 600; color: #f8fbff; -webkit-text-stroke: 1px #3f78c0; text-shadow: 0 0 3px #9cc3ee; }
.bar { padding-bottom: 5px; line-height: 16px; }
.hl { font-size: 13px; background: linear-gradient(#ff0, #ff0) 4px 19px / 20px 5px no-repeat; }
.hl svg { margin-left: -6px; }
.red { font-size: 19px; background: linear-gradient(#e00, #e00) 4px 19px / 20px 5px no-repeat; }
.shade { width: 17px; height: 19px; background: #bdbdbd; color: #444; font-weight: 600; font-size: 17px; line-height: 18px; }
.circ { width: 18px; height: 18px; border: 1px solid #666; border-radius: 50%; font-size: 11px; line-height: 16px; }
.num span { font-size: 8px; line-height: 7px; color: #3f6ba5; margin-right: 2px; }
.styles .gbody { padding: 3px 0 0 11px; }
.gallery { display: flex; height: 75px; background: #fff; border: 1px solid #d8d8d8; }
.style { width: 90px; height: 71px; flex-direction: column; padding: 9px 8px 0; justify-content: flex-start; align-items: stretch; }
.style.cur { border: 5px solid #c6c6c6; padding: 4px 3px 0; }
.smp { height: 34px; line-height: 34px; overflow: hidden; font-size: 17px; text-align: left; color: #111; }
.body { font-family: "Noto Sans CJK SC", sans-serif; font-weight: 300; }
.nm { color: #555; text-align: center; line-height: 24px; }
.h1 { font-size: 33px; font-weight: 500; color: #000; }
.h2 { font-size: 25px; }
.bold { font-weight: 600; color: #000; }
.em { font-style: italic; }
.soft { color: #666; }
.blue { color: #5a7bc4; }
.gscroll { display: flex; flex-direction: column; width: 20px; border-left: 1px solid #cfcfcf; }
.gscroll button { flex: 1; border-bottom: 1px solid #cfcfcf; }
.gscroll button:last-child { border: 0; }
.gscroll .gone { background: #e4e4e4; opacity: .6; }
.open { flex-direction: column; width: 85px; padding-top: 8px; }
.open span { line-height: 19px; }
.open svg { margin-bottom: 4px; }

/* work area */
.work { display: flex; flex: 1; min-height: 0; background: #e6e6e6; }
.vcol { display: flex; flex-direction: column; align-items: center; width: 32px; flex: none; }
.tabsel { width: 32px; height: 31px; padding: 5px 5px; border: 3px solid #dadada; background: #fff; flex: none; margin-bottom: 3px; }
.tabsel i { display: block; width: 8px; height: 9px; margin: 4px 3px; border: solid #666; border-width: 0 0 3px 3px; }
.vrule { width: 21px; flex: 1; min-height: 0; overflow: hidden; margin-right: 1px; background: #fff; font: 12px/21px "Liberation Sans", sans-serif; color: #444; }
.vnums span { display: block; height: 39px; writing-mode: vertical-rl; transform: rotate(180deg); text-align: center; background: linear-gradient(#444, #444) 6px 0 / 9px 1px no-repeat; }
.neg { height: 123px; background: #c6c6c6; overflow: hidden; }
.neg span:first-child { height: 24px; text-align: end; padding-bottom: 1px; }
.vnums:not(.neg) span:first-child { height: 18px; }
.canvas { display: flex; flex-direction: column; align-items: center; flex: 1; min-width: 0; }
.hrule { position: relative; flex: none; width: 1487px; height: 20px; margin: 6px 0 8px; background: linear-gradient(90deg, #c6c6c6 224px, #fff 224px 1261px, #c6c6c6 1261px); }
.hnums { display: grid; grid-template-columns: repeat(57, 1fr); width: 1495px; font: 12px/20px "Liberation Sans", sans-serif; color: #444; text-align: center; }
.hnums span { background: linear-gradient(#444, #444) 0 7px / 1px 7px no-repeat; }
.ind { position: absolute; }
.ind.left { left: 218px; top: -3px; }
.ind.right { left: 1255px; top: 14px; }
.page { position: relative; width: 1487px; flex: 1; min-height: 0; overflow: hidden; background: #fff; border: solid #c9c9c9; border-width: 0 1px; }
.corners { display: flex; justify-content: space-between; padding: 76px 178px 0; }
.corners i { width: 46px; height: 46px; border: solid #a6a6a6; border-width: 0 1px 1px 0; }
.corners i:last-child { border-width: 0 0 1px 1px; }
.text { padding: 1px 220px 0 223px; color: #000; font: 300 26px/39px "Noto Sans CJK SC", sans-serif; text-spacing-trim: space-all; }
.text p { height: 39px; white-space: pre; }
.mk { display: inline-block; width: 20px; height: 20px; margin-right: -20px; overflow: visible; }
.mk.l { width: 24px; height: 24px; margin-right: -24px; }
.text .title { height: 68px; line-height: 68px; font-size: 40px; font-weight: 600; text-align: center; }
.ml { margin: 0 10px; }
.ml, .sub span, .sec span { font-family: "Noto Sans Mono CJK SC", "Liberation Mono", monospace; }
.text .sub { height: 52px; line-height: 52px; font-size: 25px; text-align: center; }
.sub b { font-weight: 700; }
.sub span { font-weight: 400; }
.text .sec { height: 72px; line-height: 64px; font-size: 35px; font-weight: 600; }
.caret { display: inline-block; width: 2px; height: 44px; margin: 0 -1px; background: #000; vertical-align: middle; }
.text .step { font: 500 28px/47px "Liberation Serif", "Noto Serif CJK SC", "Noto Sans CJK SC", serif; -webkit-text-stroke: .5px #000; }
.text .song { font-family: "Noto Serif CJK SC", "Noto Sans CJK SC", serif; }
.song span { font-family: "Liberation Mono", monospace; font-size: 22px; margin: 0 7px; }
.text .url { font-size: 25px; }
.text a { color: #1f63b5; text-decoration: underline 1px; text-underline-offset: 5px; text-decoration-skip-ink: none; }
.sq { text-decoration: underline wavy #e01020 1px; text-underline-offset: 5px; text-decoration-skip-ink: none; }
.gr { text-decoration: underline double #2f6fc4 1px; text-underline-offset: 5px; }
.box { height: 40px; margin: 20px -2px 0 0; background: #d9d9d9; border: 2px solid #7f7f7f; }
.ibeam { position: absolute; left: 936px; top: 275px; }
.vscroll { display: flex; flex-direction: column; width: 20px; padding: 2px 1px; flex: none; }
.vscroll button { height: 19px; background: #fff; border: 1px solid #ababab; }
.vscroll i { height: 40px; margin: 5px 0 auto; background: #fff; border: 1px solid #ababab; }

/* status bar */
.status { display: flex; height: 27px; flex: none; align-items: center; background: #f1f1f1; border-top: 1px solid #c6c6c6; color: #444; }
.info { display: flex; align-items: center; gap: 25px; padding-left: 10px; flex: 1; }
.views { display: flex; align-self: stretch; }
.views button { width: 50px; }
.views .on { background: #c6c6c6; }
.zoom { display: flex; align-items: center; gap: 5px; padding: 0 12px 0 7px; }
.zoom span { margin-left: 11px; }
.zoom input { width: 126px; height: 14px; margin: 0; appearance: none; background: linear-gradient(#999, #999) 0 7px / 100% 1px no-repeat, linear-gradient(#888, #888) 64px 3px / 1px 8px no-repeat; }
.zoom input::-webkit-slider-thumb { appearance: none; width: 6px; height: 14px; background: #6a6a6a; }

/* taskbar */
.taskbar { display: flex; height: 50px; flex: none; align-items: stretch; color: #111; background: linear-gradient(90deg, #f0e2ca 0, #efe6d6 60px, #ececea 500px, #ebebea 1000px, #dadada 1340px, #e2ddd3 1480px, #ebdfc9 1600px, #e7dcc6 100%); }
.start { width: 60px; }
.search { display: flex; align-items: center; gap: 14px; width: 429px; padding-left: 14px; background: #fff; border: 1px solid #c9c9c9; }
.search input { flex: 1; min-width: 0; border: 0; padding: 0; background: none; font: 19px/28px "Noto Sans CJK SC", sans-serif; }
.search input::placeholder { color: #333; }
.sys { display: flex; margin-left: 1px; }
.sys button { width: 60px; }
.apps { display: flex; margin-left: 7px; }
.apps button { width: 50px; }
.apps .run { background: linear-gradient(#0f72c4, #0f72c4) center bottom / 40px 3px no-repeat; }
.apps .two { background: linear-gradient(90deg, #0f72c4 30px, #76a8d8 30px) center bottom / 40px 3px no-repeat; }
.apps .wide { background: linear-gradient(#0f72c4, #0f72c4) center bottom / 50px 3px no-repeat, #f7f7f7; }
.logo { font: 700 14px "Noto Sans", sans-serif; fill: #fff; }
.yd { width: 30px; height: 30px; border-radius: 6px; background: #e02419; color: #fff; font-size: 12px; font-weight: 700; line-height: 30px; }
.tray { display: flex; align-items: center; gap: 10px; margin-left: auto; }
.tray .gap { width: 8px; }
.ime { font-size: 19px; width: 20px; font-weight: 500; }
.py { width: 20px; height: 20px; margin: 0 4px 0 6px; border: 1px solid #222; background: #fff; font-size: 15px; line-height: 18px; text-align: center; }
.tray time { display: flex; flex-direction: column; width: 90px; text-align: center; line-height: 24px; }
.note { margin: 0 14px 0 8px; }
.desk { width: 6px; align-self: stretch; border-left: 1px solid #b5ab98; }
```
